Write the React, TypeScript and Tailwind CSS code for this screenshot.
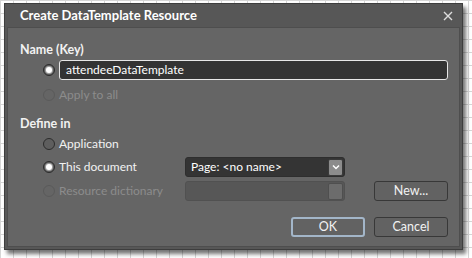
import React from "react";

const font = { fontFamily: 'Lato, "Noto Sans", sans-serif' };

function Radio({ checked, disabled }: { checked?: boolean; disabled?: boolean }) {
  return (
    <span
      className={
        "flex h-[12px] w-[12px] shrink-0 items-center justify-center rounded-full border " +
        (disabled ? "border-[#5a5a5a]" : "border-[#2c2c2c] bg-[#5e5e5e]")
      }
    >
      {checked && <span className="h-[6px] w-[6px] rounded-full bg-white ring-1 ring-[#a0a0a0]" />}
    </span>
  );
}

function Option({ label, checked, disabled }: { label: string; checked?: boolean; disabled?: boolean }) {
  return (
    <div className="flex w-[142px] items-center gap-[4px]">
      <Radio checked={checked} disabled={disabled} />
      <span className={"text-[12px] leading-none " + (disabled ? "text-[#8c8c8c]" : "text-[#f2f2f2]")}>{label}</span>
    </div>
  );
}

function Button({ label, primary }: { label: string; primary?: boolean }) {
  return (
    <button
      className={
        "flex h-[20px] w-[74px] items-center justify-center rounded-[3px] bg-[#626262] text-[12.5px] leading-none text-[#f2f2f2] " +
        (primary ? "border-2 border-[#a3b6c9]" : "border border-[#383838]")
      }
    >
      {label}
    </button>
  );
}

export default function App() {
  return (
    <div
      className="h-[258px] w-[472px] overflow-hidden bg-white bg-[linear-gradient(to_right,#d6d6d6_1px,transparent_1px),linear-gradient(to_bottom,#d6d6d6_1px,transparent_1px)] bg-[size:13px_13px] pl-[4px] pt-[3px]"
      style={font}
    >
      <div className="flex h-[247px] w-[459px] flex-col border border-[#3e3e3e] bg-[#575757] shadow-[3px_4px_4px_rgba(0,0,0,0.55)]">
        {/* Title bar */}
        <div className="flex h-[23px] shrink-0 items-center justify-between pl-[15px] pr-[9px]">
          <span className="text-[13px] font-bold leading-none text-white">Create DataTemplate Resource</span>
          <svg width="10" height="10" viewBox="0 0 10 10" className="text-[#dedede]">
            <path d="M1 1 L9 9 M9 1 L1 9" stroke="currentColor" strokeWidth="1.4" />
          </svg>
        </div>

        {/* Body */}
        <div className="mx-[2px] mb-[2px] flex flex-1 flex-col border border-[#4e4e4e] bg-[#656565] pl-[12px] pt-[15px]">
          <div className="flex h-[14px] items-center text-[12.5px] font-bold text-[#f2f2f2]">Name (Key)</div>

          <div className="mt-[3px] flex h-[20px] items-center gap-[4px] pl-[23px]">
            <Radio checked />
            <div className="flex h-[20px] w-[389px] items-center rounded-[3px] border border-[#e6e6e6] bg-[#333333] pl-[6px] text-[12px] text-white">
              attendeeDataTemplate
            </div>
          </div>

          <div className="mt-[5px] flex h-[20px] items-center pl-[23px]">
            <Option label="Apply to all" disabled />
          </div>

          <div className="mt-[12px] flex h-[14px] items-center text-[12.5px] font-bold text-[#f2f2f2]">Define in</div>

          <div className="mt-[3px] flex h-[20px] items-center pl-[23px]">
            <Option label="Application" />
          </div>

          <div className="mt-[3px] flex h-[20px] items-center pl-[23px]">
            <Option label="This document" checked />
            <div className="flex h-[20px] w-[160px] items-center justify-between rounded-[3px] border border-[#2e2e2e] bg-[#343434] pl-[5px] pr-[1px]">
              <span className="text-[12px] leading-none text-white">Page: &lt;no name&gt;</span>
              <span className="flex h-[17px] w-[15px] items-center justify-center rounded-[2px] border border-[#3a3a3a] bg-[#8c8c8c]">
                <svg width="8" height="6" viewBox="0 0 8 6">
                  <path d="M1 1.5 L4 4.5 L7 1.5" fill="none" stroke="white" strokeWidth="1.5" />
                </svg>
              </span>
            </div>
          </div>

          <div className="mt-[4px] flex h-[20px] items-center pl-[23px]">
            <Option label="Resource dictionary" disabled />
            <div className="flex h-[20px] w-[160px] items-center justify-end rounded-[3px] border border-[#515151] bg-[#575757] pr-[1px]">
              <span className="h-[17px] w-[15px] rounded-[2px] border border-[#4f4f4f] bg-[#6c6c6c]" />
            </div>
            <div className="ml-[29px]">
              <Button label="New..." />
            </div>
          </div>

          <div className="mt-[16px] flex h-[20px] items-center gap-[9px] pl-[271px]">
            <Button label="OK" primary />
            <Button label="Cancel" />
          </div>
        </div>
      </div>
    </div>
  );
}
